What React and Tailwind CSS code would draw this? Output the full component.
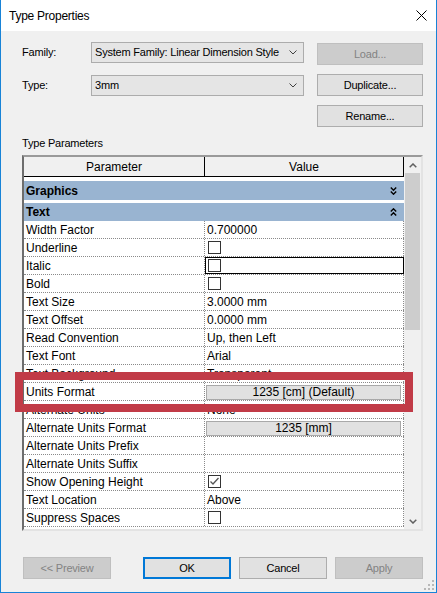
import React from "react";

const ROWS = [
  { name: "Width Factor", value: "0.700000" },
  { name: "Underline", check: false },
  { name: "Italic", check: false, focus: true },
  { name: "Bold", check: false },
  { name: "Text Size", value: "3.0000 mm" },
  { name: "Text Offset", value: "0.0000 mm" },
  { name: "Read Convention", value: "Up, then Left" },
  { name: "Text Font", value: "Arial" },
  { name: "Text Background", value: "Transparent" },
  { name: "Units Format", button: "1235 [cm] (Default)" },
  { name: "Alternate Units", value: "None" },
  { name: "Alternate Units Format", button: "1235 [mm]" },
  { name: "Alternate Units Prefix", value: "" },
  { name: "Alternate Units Suffix", value: "" },
  { name: "Show Opening Height", check: true },
  { name: "Text Location", value: "Above" },
  { name: "Suppress Spaces", check: false },
];

function Btn({ children, disabled, primary, className = "" }) {
  const look = disabled
    ? "bg-[#cccccc] border border-[#bfbfbf] text-[#838383]"
    : primary
    ? "bg-[#e1e1e1] border-2 border-[#0078d7] text-black"
    : "bg-[#e1e1e1] border border-[#adadad] text-black";
  return (
    <div className={`flex items-center justify-center ${look} ${className}`}>{children}</div>
  );
}

function Select({ text, className = "" }) {
  return (
    <div className={`flex items-center justify-between bg-[#e5e5e5] border border-[#acacac] pl-[3px] pr-[6px] ${className}`}>
      <span>{text}</span>
      <svg width="8" height="5" viewBox="0 0 8 5">
        <polyline points="0.5,0.5 4,4 7.5,0.5" fill="none" stroke="#404040" strokeWidth="1" />
      </svg>
    </div>
  );
}

function Check({ checked }) {
  return (
    <div className="ml-[3px] w-[13px] h-[13px] border border-[#333333] bg-white flex items-center justify-center">
      {checked && (
        <svg width="11" height="11" viewBox="0 0 11 11">
          <polyline points="1.5,5.5 4,8 9.5,2" fill="none" stroke="#555555" strokeWidth="1.3" />
        </svg>
      )}
    </div>
  );
}

function DoubleChevron({ up }) {
  return (
    <svg width="7" height="8" viewBox="0 0 7 8">
      {up ? (
        <>
          <polyline points="0.8,3.5 3.5,0.8 6.2,3.5" fill="none" stroke="#000" strokeWidth="1.4" />
          <polyline points="0.8,7.5 3.5,4.8 6.2,7.5" fill="none" stroke="#000" strokeWidth="1.4" />
        </>
      ) : (
        <>
          <polyline points="0.8,0.5 3.5,3.2 6.2,0.5" fill="none" stroke="#000" strokeWidth="1.4" />
          <polyline points="0.8,4.5 3.5,7.2 6.2,4.5" fill="none" stroke="#000" strokeWidth="1.4" />
        </>
      )}
    </svg>
  );
}

function GroupBar({ label, up }) {
  return (
    <div className="flex items-center justify-between bg-[#99b4d1] pl-[2px] pr-[7px] font-bold text-[12px]">
      <span>{label}</span>
      <DoubleChevron up={up} />
    </div>
  );
}

export default function App() {
  return (
    <div className="relative w-[437px] h-[593px] bg-[#f0f0f0] border-x border-b border-[#1883d7] font-['Liberation_Sans',Arial,sans-serif] text-black overflow-hidden">
      {/* title bar */}
      <div className="h-[31px] bg-white flex items-center justify-between pl-[8px] pr-[9px]">
        <span className="text-[12px] tracking-[-0.25px]">Type Properties</span>
        <svg width="11" height="11" viewBox="0 0 11 11">
          <line x1="0.5" y1="0.5" x2="10.5" y2="10.5" stroke="#000" strokeWidth="1" />
          <line x1="10.5" y1="0.5" x2="0.5" y2="10.5" stroke="#000" strokeWidth="1" />
        </svg>
      </div>

      <div className="pl-[21px] pt-[11px] text-[11px] tracking-[-0.2px]">
        <div className="flex items-start">
          <div className="w-[69px] h-[21px] flex items-center">Family:</div>
          <Select text="System Family: Linear Dimension Style" className="w-[213px] h-[21px]" />
          <Btn disabled className="ml-[13px] mt-[1px] w-[106px] h-[22px]">Load...</Btn>
        </div>
        <div className="flex items-start mt-[9px]">
          <div className="w-[69px] h-[22px] flex items-center">Type:</div>
          <Select text="3mm" className="mt-[1px] w-[213px] h-[21px]" />
          <Btn className="ml-[13px] w-[106px] h-[22px]">Duplicate...</Btn>
        </div>
        <Btn className="mt-[9px] ml-[295px] w-[106px] h-[22px]">Rename...</Btn>

        <div className="mt-[8px] h-[16px] flex items-center">Type Parameters</div>
      </div>

      {/* property grid */}
      <div className="ml-[21px] mt-[4px] w-[401px] h-[376px] flex border-2 border-t-[#9a9a9a] border-l-[#6d6d6d] border-r-[#e3e3e3] border-b-[#e3e3e3] bg-white tracking-normal text-[12px] leading-[14px]">
        <div className="w-[380px] flex flex-col">
          <div className="h-[20px] flex bg-[#f0f0f0] border-b border-black">
            <div className="w-[181px] border-r border-black flex items-center justify-center">Parameter</div>
            <div className="flex-1 border-r border-black flex items-center justify-center">Value</div>
          </div>
          <div className="h-[4px]" />
          <div className="h-[19px] flex flex-col justify-center bg-[#99b4d1]">
            <GroupBar label="Graphics" />
          </div>
          <div className="h-[3px]" />
          <div className="h-[18px] flex flex-col justify-center bg-[#99b4d1]">
            <GroupBar label="Text" up />
          </div>
          {ROWS.map((r) => (
            <div key={r.name} className="h-[18px] flex border-b border-dotted border-[#8a8a8a]">
              <div className="w-[181px] pl-[2px] flex items-center border-r border-dotted border-[#8a8a8a] whitespace-nowrap">
                {r.name}
              </div>
              <div className="relative flex-1 flex items-center border-r border-dotted border-[#8a8a8a]">
                {r.value !== undefined && <span className="pl-[2px]">{r.value}</span>}
                {r.check !== undefined && <Check checked={r.check} />}
                {r.button && (
                  <div className="ml-[1px] mr-[2px] mt-[1px] flex-1 h-[15px] bg-[#e1e1e1] border border-[#a9a9a9] flex items-center justify-center">
                    {r.button}
                  </div>
                )}
                {r.focus && <div className="absolute left-0 right-[-1px] top-0 bottom-0 border border-black" />}
              </div>
            </div>
          ))}
        </div>
        {/* scrollbar */}
        <div className="w-[17px] bg-[#f0f0f0] flex flex-col">
          <div className="h-[16px] flex items-center justify-center">
            <svg width="8" height="5" viewBox="0 0 8 5">
              <polyline points="0.7,4.3 4,1 7.3,4.3" fill="none" stroke="#606060" strokeWidth="1.5" />
            </svg>
          </div>
          <div className="flex-1">
            <div className="ml-[1px] w-[15px] h-[157px] bg-[#cdcdcd]" />
          </div>
          <div className="h-[16px] flex items-center justify-center">
            <svg width="8" height="5" viewBox="0 0 8 5">
              <polyline points="0.7,0.7 4,4 7.3,0.7" fill="none" stroke="#606060" strokeWidth="1.5" />
            </svg>
          </div>
        </div>
      </div>

      {/* bottom buttons */}
      <div className="mt-[26px] pl-[22px] flex text-[11px] tracking-[-0.2px]">
        <Btn disabled className="w-[88px] h-[22px]">&lt;&lt; Preview</Btn>
        <Btn primary className="ml-[32px] w-[88px] h-[22px]">OK</Btn>
        <Btn className="ml-[8px] w-[88px] h-[22px]">Cancel</Btn>
        <Btn disabled className="ml-[8px] w-[88px] h-[22px]">Apply</Btn>
      </div>

      {/* resize grip */}
      <svg className="absolute right-[2px] bottom-[2px]" width="10" height="10" viewBox="0 0 10 10">
        <rect x="8" y="0" width="2" height="2" fill="#b8b8b8" />
        <rect x="4" y="4" width="2" height="2" fill="#b8b8b8" />
        <rect x="8" y="4" width="2" height="2" fill="#b8b8b8" />
        <rect x="0" y="8" width="2" height="2" fill="#b8b8b8" />
        <rect x="4" y="8" width="2" height="2" fill="#b8b8b8" />
        <rect x="8" y="8" width="2" height="2" fill="#b8b8b8" />
      </svg>

      {/* red highlight frame */}
      <div className="absolute left-[14px] top-[372px] w-[398px] h-[40px] border-[8px] border-[#c13b47]" />
    </div>
  );
}
